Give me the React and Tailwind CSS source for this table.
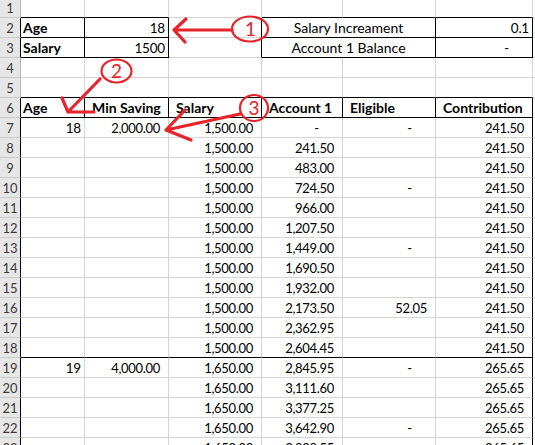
import React from "react";

const W = [64, 84, 93, 81, 93, 97];
const GRID = "#d4d4d4";
const BLACK = "#000000";

// cell kinds: n = accounting number, d = accounting dash, g = general number,
// l = bold label, h = bold header, c = centered text
const n = (t) => ({ t, k: "n" });
const d = { t: "-", k: "d" };
const g = (t) => ({ t, k: "g" });
const l = (t) => ({ t, k: "l" });
const h = (t) => ({ t, k: "h" });

const data = {
  2: [l("Age"), g("18"), null, { t: "Salary Increament", k: "c", span: 2 }, g("0.1")],
  3: [l("Salary"), g("1500"), null, { t: "Account 1 Balance", k: "c", span: 2 }, d],
  6: [l("Age"), h("Min Saving"), h("Salary"), h("Account 1"), h("Eligible"), h("Contribution")],
  7: [g("18"), n("2,000.00"), n("1,500.00"), d, d, n("241.50")],
  8: [null, null, n("1,500.00"), n("241.50"), null, n("241.50")],
  9: [null, null, n("1,500.00"), n("483.00"), null, n("241.50")],
  10: [null, null, n("1,500.00"), n("724.50"), d, n("241.50")],
  11: [null, null, n("1,500.00"), n("966.00"), null, n("241.50")],
  12: [null, null, n("1,500.00"), n("1,207.50"), null, n("241.50")],
  13: [null, null, n("1,500.00"), n("1,449.00"), d, n("241.50")],
  14: [null, null, n("1,500.00"), n("1,690.50"), null, n("241.50")],
  15: [null, null, n("1,500.00"), n("1,932.00"), null, n("241.50")],
  16: [null, null, n("1,500.00"), n("2,173.50"), n("52.05"), n("241.50")],
  17: [null, null, n("1,500.00"), n("2,362.95"), null, n("241.50")],
  18: [null, null, n("1,500.00"), n("2,604.45"), null, n("241.50")],
  19: [g("19"), n("4,000.00"), n("1,650.00"), n("2,845.95"), d, n("265.65")],
  20: [null, null, n("1,650.00"), n("3,111.60"), null, n("265.65")],
  21: [null, null, n("1,650.00"), n("3,377.25"), null, n("265.65")],
  22: [null, null, n("1,650.00"), n("3,642.90"), d, n("265.65")],
  23: [null, null, n("1,650.00"), n("3,908.55"), null, n("265.65")],
};

const kindClass = {
  n: "justify-end pr-[8px] text-[13px] tracking-[-0.3px]",
  d: "justify-end pr-[23px] text-[13px]",
  g: "justify-end pr-[3px] text-[13.5px] tracking-[-0.2px]",
  l: "justify-start pl-[2px] font-bold text-[14px]",
  h: "justify-start pl-[7px] font-bold text-[14px]",
  c: "justify-center text-[14px]",
};

function rightBlack(r, c) {
  if (r === 2 || r === 3) return c !== 3;
  if (r === 6) return true;
  if (r >= 7) return c === 5;
  return false;
}

function bottomBlack(r, c) {
  if (r <= 3) return c !== 2;
  if (r === 5 || r === 6 || r === 18) return true;
  return false;
}

function Row({ r }) {
  const cells = data[r] || [null, null, null, null, null, null];
  const out = [];
  let c = 0;
  let i = 0;
  while (c < 6) {
    const cell = cells[i];
    const span = cell && cell.span ? cell.span : 1;
    let w = 0;
    for (let j = 0; j < span; j++) w += W[c + j];
    const last = c + span - 1;
    out.push(
      <div
        key={c}
        className={`flex h-full shrink-0 items-end border-r border-b pb-[1px] ${
          cell ? kindClass[cell.k] : ""
        }`}
        style={{
          width: w,
          borderRightColor: rightBlack(r, last) ? BLACK : GRID,
          borderBottomColor: bottomBlack(r, last) ? BLACK : GRID,
        }}
      >
        {cell && <span className="whitespace-nowrap leading-[16px]">{cell.t}</span>}
      </div>
    );
    c += span;
    i += 1;
  }
  const tableRow = r === 2 || r === 3 || r >= 6;
  return (
    <div className={`flex ${r === 1 ? "h-[18px]" : "h-[20px]"}`}>
      <div
        className="flex h-full w-[21px] shrink-0 items-end justify-center border-r border-b border-b-[#c9c9c9] bg-[#e6e6e6] pb-[2px] text-[13px] leading-[14px] text-[#3a3a3a]"
        style={{ borderRightColor: tableRow ? BLACK : "#b5b5b5" }}
      >
        {r}
      </div>
      {out}
      <div className="h-full w-[2px] shrink-0 border-b border-[#d4d4d4]" />
    </div>
  );
}

export default function App() {
  const rows = [];
  for (let r = 1; r <= 23; r++) rows.push(r);
  return (
    <div className="relative h-[445px] w-[535px] overflow-hidden bg-white font-['Lato',sans-serif] text-[13px] text-black">
      {rows.map((r) => (
        <Row key={r} r={r} />
      ))}

      {/* red annotations */}
      <svg className="pointer-events-none absolute left-0 top-0" width="535" height="445">
        <g fill="none" stroke="#e8232a" strokeLinecap="round" strokeLinejoin="round">
          <ellipse cx="250" cy="29" rx="18" ry="12.5" strokeWidth="2.2" />
          <path d="M232 30 H174 M174 30 L186 19 M174 30 L185 42" strokeWidth="3.2" />
          <ellipse cx="116.5" cy="71" rx="15" ry="11.5" strokeWidth="2.2" />
          <path d="M100 79 L68 112 M68 112 L62 98 M68 112 L94 112" strokeWidth="3.2" />
          <ellipse cx="254" cy="108" rx="14" ry="13" strokeWidth="2.2" />
          <path d="M240 114 L166 130 M166 130 L185 110 M166 130 L191 140" strokeWidth="3.2" />
        </g>
        <g fill="#e8232a" fontFamily="Lato, sans-serif" fontSize="19" textAnchor="middle">
          <text x="250.5" y="36">1</text>
          <text x="116.5" y="78">2</text>
          <text x="254" y="115">3</text>
        </g>
      </svg>
    </div>
  );
}
